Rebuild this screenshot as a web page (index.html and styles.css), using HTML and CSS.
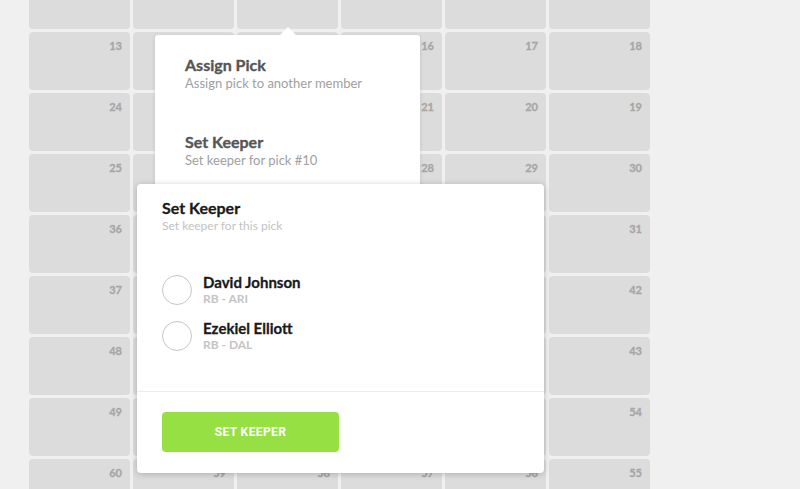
FILE: index.html
```html
<!DOCTYPE html>
<html>
<head>
<meta charset="utf-8">
<link rel="stylesheet" href="styles.css">
</head>
<body>
<div class="page">
  <div class="board">
    <div class="cell"></div><div class="cell"></div><div class="cell"></div><div class="cell"></div><div class="cell"></div><div class="cell"></div>
    <div class="cell"><span>13</span></div><div class="cell"></div><div class="cell"></div><div class="cell"><span>16</span></div><div class="cell"><span>17</span></div><div class="cell"><span>18</span></div>
    <div class="cell"><span>24</span></div><div class="cell"></div><div class="cell"></div><div class="cell"><span>21</span></div><div class="cell"><span>20</span></div><div class="cell"><span>19</span></div>
    <div class="cell"><span>25</span></div><div class="cell"></div><div class="cell"></div><div class="cell"><span>28</span></div><div class="cell"><span>29</span></div><div class="cell"><span>30</span></div>
    <div class="cell"><span>36</span></div><div class="cell"></div><div class="cell"></div><div class="cell"></div><div class="cell"></div><div class="cell"><span>31</span></div>
    <div class="cell"><span>37</span></div><div class="cell"></div><div class="cell"></div><div class="cell"></div><div class="cell"></div><div class="cell"><span>42</span></div>
    <div class="cell"><span>48</span></div><div class="cell"></div><div class="cell"></div><div class="cell"></div><div class="cell"></div><div class="cell"><span>43</span></div>
    <div class="cell"><span>49</span></div><div class="cell"></div><div class="cell"></div><div class="cell"></div><div class="cell"></div><div class="cell"><span>54</span></div>
    <div class="cell"><span>60</span></div><div class="cell"><span>59</span></div><div class="cell"><span>58</span></div><div class="cell"><span>57</span></div><div class="cell"><span>56</span></div><div class="cell"><span>55</span></div>
  </div>

  <div class="menu">
    <div class="menu-item">
      <div class="menu-title">Assign Pick</div>
      <div class="menu-sub">Assign pick to another member</div>
    </div>
    <div class="menu-item">
      <div class="menu-title">Set Keeper</div>
      <div class="menu-sub">Set keeper for pick #10</div>
    </div>
  </div>

  <div class="modal">
    <div class="modal-head">
      <div class="modal-title">Set Keeper</div>
      <div class="modal-sub">Set keeper for this pick</div>
    </div>
    <div class="modal-body">
      <div class="option">
        <div class="radio"></div>
        <div class="player">
          <div class="player-name">David Johnson</div>
          <div class="player-pos">RB - ARI</div>
        </div>
      </div>
      <div class="option">
        <div class="radio"></div>
        <div class="player">
          <div class="player-name">Ezekiel Elliott</div>
          <div class="player-pos">RB - DAL</div>
        </div>
      </div>
    </div>
    <div class="modal-foot">
      <button class="btn">SET KEEPER</button>
    </div>
  </div>
</div>
</body>
</html>
```

FILE: styles.css
```css
html, body {
  margin: 0;
  padding: 0;
  height: 100%;
  overflow: hidden;
  background: #f0f0f0;
  font-family: "Lato", "Noto Sans", sans-serif;
}

.page {
  position: relative;
  display: flow-root;
  height: 489px;
  padding-left: 29px;
  overflow: hidden;
}

.board {
  display: grid;
  grid-template-columns: repeat(6, 101px);
  grid-auto-rows: 58px;
  gap: 3px;
  margin-top: -29px;
}

.cell {
  background: #dcdcdc;
  border-radius: 4px;
  display: flex;
  justify-content: flex-end;
  align-items: flex-start;
  padding: 7px 8px 0 0;
  box-sizing: border-box;
}

.cell span {
  font-size: 11px;
  line-height: 13px;
  font-weight: 700;
  color: #a6a6a6;
  -webkit-text-stroke: 0.3px #a6a6a6;
}

.menu {
  position: absolute;
  left: 155px;
  top: 35px;
  width: 265px;
  height: 210px;
  background: #fff;
  border-radius: 3px;
  box-shadow: 0 1px 4px rgba(0, 0, 0, 0.12);
  z-index: 2;
}

.menu::before {
  content: "";
  position: absolute;
  left: 125px;
  top: -8px;
  width: 0;
  height: 0;
  border-left: 8px solid transparent;
  border-right: 8px solid transparent;
  border-bottom: 8px solid #fff;
}

.menu-item {
  padding: 20px 30px;
}

.menu-title {
  font-size: 16px;
  line-height: 20px;
  font-weight: 700;
  color: #555555;
  -webkit-text-stroke: 0.35px #555555;
}

.menu-sub {
  font-size: 13px;
  line-height: 17px;
  color: #a0a0a0;
}

.modal {
  position: absolute;
  left: 137px;
  top: 184px;
  width: 407px;
  height: 289px;
  background: #fff;
  border-radius: 4px;
  box-shadow: 0 1px 6px rgba(0, 0, 0, 0.22);
  z-index: 3;
  display: flex;
  flex-direction: column;
  box-sizing: border-box;
}

.modal-head {
  padding: 14px 25px 0;
}

.modal-title {
  font-size: 16px;
  line-height: 20px;
  font-weight: 700;
  color: #1a1a1a;
  -webkit-text-stroke: 0.3px #1a1a1a;
}

.modal-sub {
  font-size: 12px;
  line-height: 16px;
  color: #c2c2c2;
}

.modal-body {
  padding: 39px 25px 39px;
  display: flex;
  flex-direction: column;
  gap: 13px;
  border-bottom: 1px solid #ececec;
}

.option {
  display: flex;
  align-items: center;
  gap: 11px;
  height: 33px;
}

.radio {
  width: 30px;
  height: 30px;
  border-radius: 50%;
  border: 1.5px solid #c6c6c6;
  box-sizing: border-box;
  flex: none;
}

.player-name {
  font-size: 15px;
  line-height: 18px;
  font-weight: 700;
  color: #1a1a1a;
  -webkit-text-stroke: 0.3px #1a1a1a;
}

.player-pos {
  font-size: 12px;
  line-height: 15px;
  font-weight: 700;
  color: #c4c4c4;
}

.modal-foot {
  padding: 20px 25px 21px;
}

.btn {
  display: block;
  width: 177px;
  height: 40px;
  border: none;
  border-radius: 4px;
  background: #96e043;
  color: #fff;
  font-family: "Roboto", "Lato", sans-serif;
  font-weight: 700;
  font-size: 12px;
  letter-spacing: 0.4px;
  padding: 0;
}
```
